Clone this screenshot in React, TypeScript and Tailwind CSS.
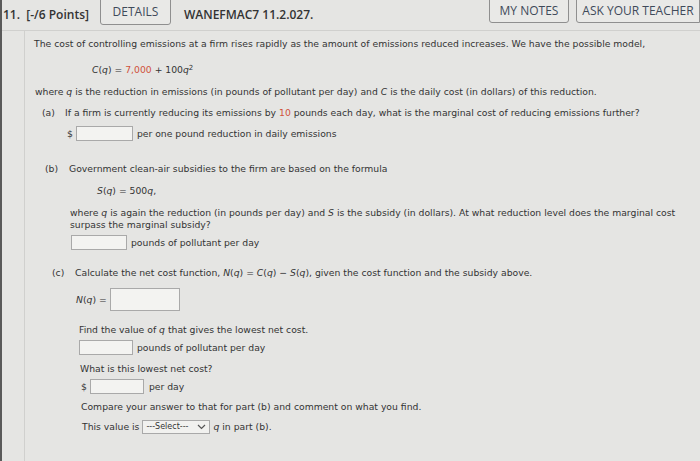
import React from 'react';

const body = { fontFamily: '"DejaVu Sans", Verdana, sans-serif' };
const head = { fontFamily: '"Open Sans", "Noto Sans", sans-serif' };

function Box({ w, h = 'h-[15px]' }: { w: string; h?: string }) {
  return <span className={`inline-block ${w} ${h} border border-[#a9a9a9] bg-[#f3f3f1] align-middle`} />;
}

function Q() {
  return <i>q</i>;
}

export default function App() {
  return (
    <div className="w-[700px] h-[461px] overflow-hidden bg-[#e5e5e3] border-l-2 border-[#5a5a5a] text-[#333]">
      <header className="flex items-start h-[31px] border-b border-[#d0d0ce]" style={head}>
        <div className="pl-[1px] pt-[6px] text-[12px] font-semibold text-[#333] w-[98px]">11.&nbsp;&nbsp;[-/6 Points]</div>
        <div className="h-[27px] w-[71px] -mt-[2px] border border-[#8f8f8f] rounded-b-[3px] bg-[#e9e9e7] flex items-center justify-center text-[12px] text-[#3f4a5a]">
          DETAILS
        </div>
        <div className="pl-[13px] pt-[6px] text-[12px] font-semibold text-[#333]">WANEFMAC7 11.2.027.</div>
        <div className="ml-auto h-[25px] w-[80px] -mt-[2px] border border-[#8f8f8f] rounded-b-[3px] bg-[#e9e9e7] flex items-center justify-center text-[12px] text-[#3f4a5a]">
          MY NOTES
        </div>
        <div className="ml-[7px] h-[25px] w-[124px] -mt-[2px] border border-[#8f8f8f] rounded-bl-[3px] bg-[#e9e9e7] flex items-center justify-center text-[12px] text-[#3f4a5a]">
          ASK YOUR TEACHER
        </div>
      </header>

      <main className="border-l border-[#d0d0ce] ml-[22px] h-[430px] text-[9.25px] leading-[12px]" style={body}>
        <p className="pl-[9px] pt-[7px]">
          The cost of controlling emissions at a firm rises rapidly as the amount of emissions reduced increases. We have the possible model,
        </p>
        <p className="pl-[67px] pt-[14px]">
          <i>C</i>(<Q />) = <span className="text-[#d0523c]">7,000</span> + 100<Q />
          <sup className="text-[7px]">2</sup>
        </p>
        <p className="pl-[10px] pt-[10px]">
          where <Q /> is the reduction in emissions (in pounds of pollutant per day) and <i>C</i> is the daily cost (in dollars) of this reduction.
        </p>
        <div className="pl-[17px] pt-[9px] flex">
          <span className="w-[23px]">(a)</span>
          <div>
            <p>
              If a firm is currently reducing its emissions by <span className="text-[#d0523c]">10</span> pounds each day, what is the marginal cost of reducing emissions further?
            </p>
            <p className="pt-[7px] flex items-center gap-[3px] pl-[2px]">
              <span>$</span>
              <Box w="w-[57px]" />
              <span className="pl-[1px]">per one pound reduction in daily emissions</span>
            </p>
          </div>
        </div>

        <div className="pl-[20px] pt-[22px] flex">
          <span className="w-[24px]">(b)</span>
          <div>
            <p>Government clean-air subsidies to the firm are based on the formula</p>
            <p className="pl-[28px] pt-[10px]">
              <i>S</i>(<Q />) = 500<Q />,
            </p>
            <p className="pl-[1px] pt-[10px] leading-[12px]">
              where <Q /> is again the reduction (in pounds per day) and <i>S</i> is the subsidy (in dollars). At what reduction level does the marginal cost
              <br />
              surpass the marginal subsidy?
            </p>
            <p className="pt-[4px] flex items-center gap-[4px] pl-[2px]">
              <Box w="w-[56px]" />
              <span>pounds of pollutant per day</span>
            </p>
          </div>
        </div>

        <div className="pl-[27px] pt-[17px] flex">
          <span className="w-[23px]">(c)</span>
          <div>
            <p>
              Calculate the net cost function, <i>N</i>(<Q />) = <i>C</i>(<Q />) − <i>S</i>(<Q />), given the cost function and the subsidy above.
            </p>
            <p className="pt-[9px] flex items-center gap-[3px] pl-[1px]">
              <span>
                <i>N</i>(<Q />) =
              </span>
              <Box w="w-[70px]" h="h-[23px]" />
            </p>
            <p className="pl-[4px] pt-[13px]">
              Find the value of <Q /> that gives the lowest net cost.
            </p>
            <p className="pt-[4px] flex items-center gap-[4px] pl-[4px]">
              <Box w="w-[54px]" />
              <span>pounds of pollutant per day</span>
            </p>
            <p className="pl-[5px] pt-[8px]">What is this lowest net cost?</p>
            <p className="pt-[4px] flex items-center gap-[3px] pl-[6px]">
              <span>$</span>
              <Box w="w-[54px]" />
              <span className="pl-[2px]">per day</span>
            </p>
            <p className="pl-[6px] pt-[7px]">Compare your answer to that for part (b) and comment on what you find.</p>
            <p className="pl-[7px] pt-[7px] flex items-center gap-[3px]">
              <span>This value is</span>
              <span className="inline-flex items-center justify-between w-[68px] h-[14px] border border-[#a9a9a9] bg-[#f1f1ef] px-[3px] text-[8px]">
                <span>---Select---</span>
                <svg width="9" height="6" viewBox="0 0 9 6">
                  <path d="M1 1l3.5 3.5L8 1" fill="none" stroke="#555" strokeWidth="1.2" />
                </svg>
              </span>
              <span>
                <Q /> in part (b).
              </span>
            </p>
          </div>
        </div>
      </main>
    </div>
  );
}
